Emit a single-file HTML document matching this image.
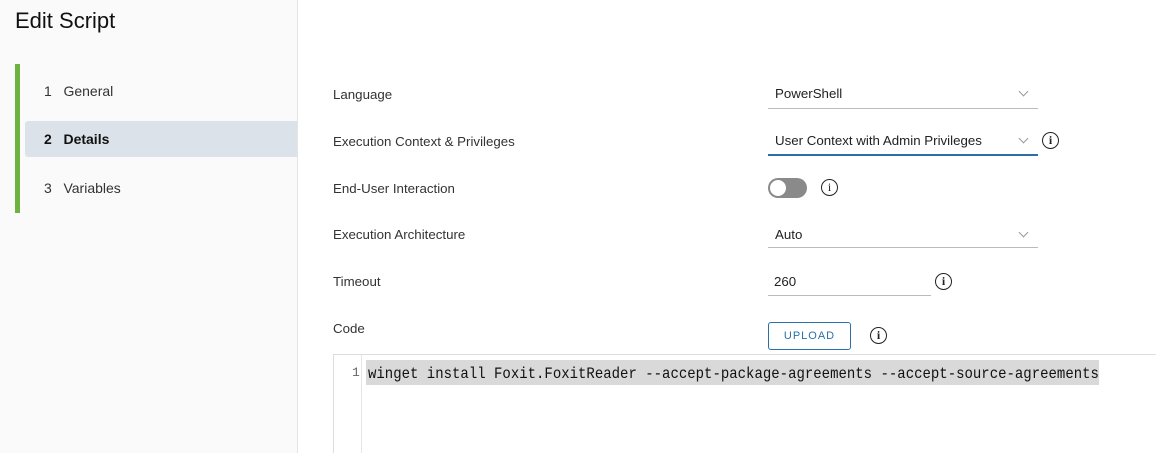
<!DOCTYPE html>
<html><head><meta charset="utf-8"><style>
*{margin:0;padding:0;box-sizing:border-box}
body{width:1156px;height:453px;overflow:hidden;background:#fff;font-family:"Liberation Sans",sans-serif;color:#333;position:relative}
.a{position:absolute}
.side{left:0;top:0;width:298px;height:453px;background:#fafafa;border-right:1px solid #e4e4e4}
.lbl{font-size:13.3px;color:#333}
.sel{font-size:13.3px;color:#222;border-bottom:1px solid #bbb;height:30px}
.chev{position:absolute;right:11px;top:9px;width:7px;height:7px;border-right:1px solid #999;border-bottom:1px solid #999;transform:rotate(45deg)}
.info{width:17px;height:17px;border:1.6px solid #222;border-radius:50%;font:bold 12px "Liberation Serif",serif;text-align:center;line-height:14px;color:#222}
</style></head><body>
<div class="a side"></div>
<div class="a" style="left:15px;top:8px;font-size:22px;color:#111">Edit Script</div>
<div class="a" style="left:15px;top:64px;width:5px;height:149px;background:#6db33f"></div>
<div class="a" style="left:25px;top:121px;width:272px;height:36px;background:#dbe2e9;border-radius:3px 0 0 3px"></div>
<div class="a lbl" style="left:44px;top:83px;font-size:14px">1&nbsp;&nbsp;&nbsp;General</div>
<div class="a lbl" style="left:44px;top:131px;font-size:14px;font-weight:bold;color:#111">2&nbsp;&nbsp;&nbsp;Details</div>
<div class="a lbl" style="left:44px;top:180px;font-size:14px">3&nbsp;&nbsp;&nbsp;Variables</div>

<div class="a lbl" style="left:333px;top:87px">Language</div>
<div class="a lbl" style="left:333px;top:134px">Execution Context &amp; Privileges</div>
<div class="a lbl" style="left:333px;top:181px">End-User Interaction</div>
<div class="a lbl" style="left:333px;top:227px">Execution Architecture</div>
<div class="a lbl" style="left:333px;top:274px">Timeout</div>
<div class="a lbl" style="left:333px;top:321px">Code</div>

<div class="a sel" style="left:768px;top:79px;width:270px;padding:7px 0 0 7px">PowerShell<span class="chev"></span></div>
<div class="a sel" style="left:768px;top:125px;width:270px;padding:8px 0 0 7px;border-bottom:2px solid #2a6fa8;height:31px">User Context with Admin Privileges<span class="chev" style="top:10px"></span></div>
<div class="a info" style="left:1042px;top:132px">i</div>
<div class="a" style="left:768px;top:178px;width:39px;height:20px;border-radius:10px;background:#8a8a8a"></div>
<div class="a" style="left:770px;top:180px;width:16px;height:16px;border-radius:50%;background:#fff"></div>
<div class="a info" style="left:821px;top:179px;border-width:1.2px;font-weight:normal">i</div>
<div class="a sel" style="left:768px;top:266px;width:163px;padding:8px 0 0 6px">260</div>
<div class="a info" style="left:935px;top:273px">i</div>
<div class="a sel" style="left:768px;top:218px;width:270px;padding:9px 0 0 7px">Auto<span class="chev" style="top:11px"></span></div>
<div class="a" style="left:768px;top:322px;width:83px;height:28px;border:1px solid #2a6fa8;border-radius:3px;color:#2a6fa8;font-size:11px;letter-spacing:1px;text-align:center;line-height:26px">UPLOAD</div>
<div class="a info" style="left:870px;top:327px">i</div>

<div class="a" style="left:333px;top:354px;width:823px;height:99px;border-top:1px solid #ddd;border-left:1px solid #ddd"></div>
<div class="a" style="left:361px;top:355px;width:1px;height:98px;background:#e5e5e5"></div>
<div class="a" style="left:352px;top:365px;font:13px 'Liberation Mono',monospace;color:#666">1</div>
<div class="a" style="left:366px;top:360px;width:733px;height:25px;background:#d9d9d9"></div>
<div class="a" style="left:368px;top:364px;font:14px/18px 'Liberation Mono',monospace;color:#111;white-space:pre;transform:scaleY(1.15);transform-origin:0 0">winget install Foxit.FoxitReader --accept-package-agreements --accept-source-agreements</div>
</body></html>
